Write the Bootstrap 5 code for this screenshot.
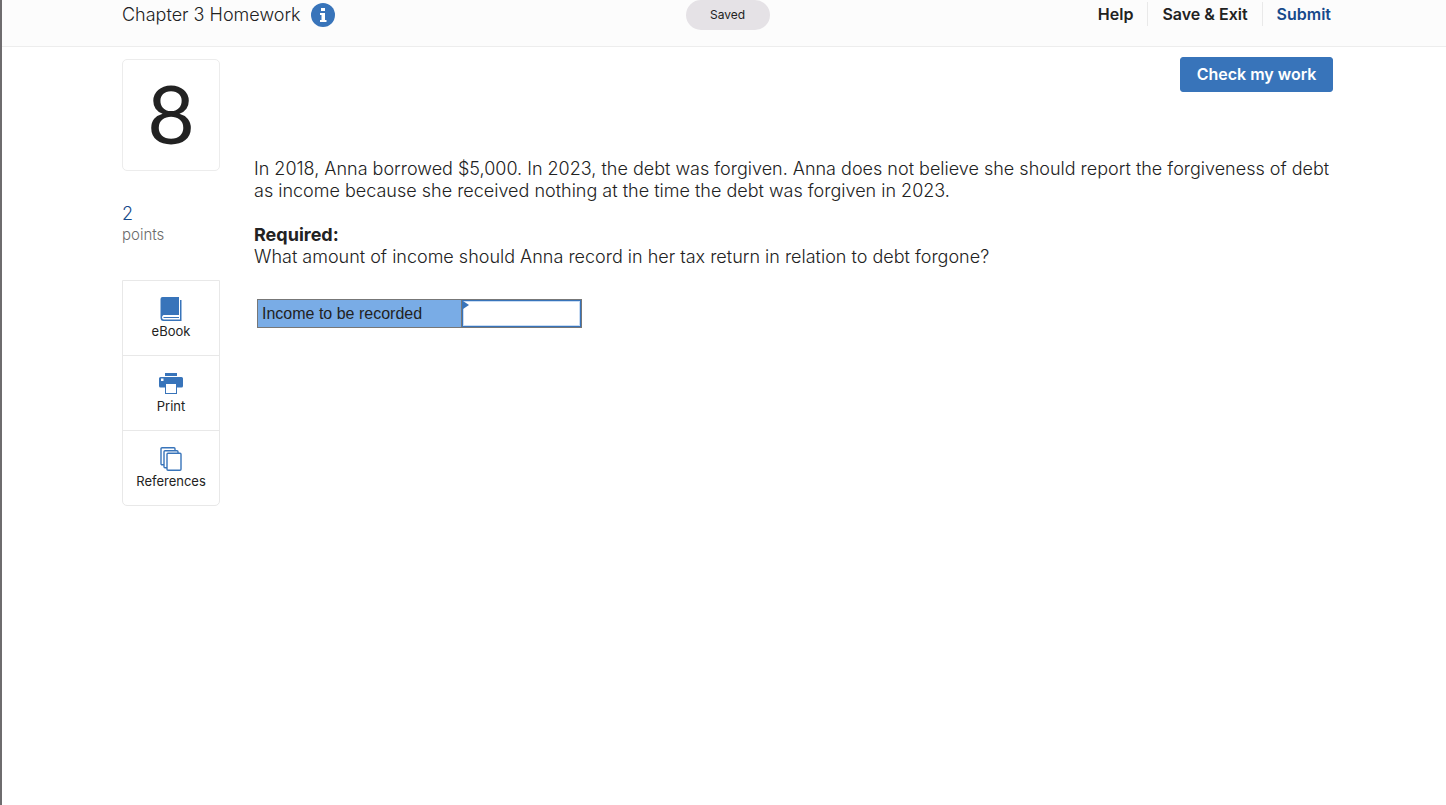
<!DOCTYPE html>
<html lang="en">
<head>
<meta charset="utf-8">
<meta name="viewport" content="width=device-width, initial-scale=1">
<title>Chapter 3 Homework</title>
<link href="https://cdn.jsdelivr.net/npm/bootstrap@5.3.0/dist/css/bootstrap.min.css" rel="stylesheet">
<style>
  :root { --brand: #3874ba; --ink: #222; --rule: #e8e8e8; }
  body { font: 300 18px/22px Inter, "Open Sans", sans-serif; color: var(--ink); border-left: 2px solid #6e6c6e; }
  .page-gutter { padding-left: 120px; padding-right: 113px; }
  .topbar { background: #fcfcfc; border-bottom: 1px solid #ededed; height: 47px; }
  .topbar .side { flex: 1 1 0; height: 30px; }
  .title-group { gap: 10px; }
  .assignment-title { font-size: 18px; font-weight: 300; line-height: 22px; }
  .save-state { background: #e5e2e6; font-size: 12px; font-weight: 400; line-height: 30px; width: 84px; }
  .info-btn { width: 24px; height: 24px; }
  .toplinks { height: 28px; }
  .toplinks a { font-size: 16px; font-weight: 600; line-height: 24px; color: var(--ink); padding: 0 14px; border-left: 1px solid #e9e9e9; }
  .toplinks li:first-child a { border-left: 0; }
  .toplinks li:last-child a { color: #174a8b; padding-right: 2px; }
  .rail { width: 98px; padding-top: 12px; }
  .question-no { height: 112px; border: 1px solid #ececec; border-radius: 5px; font: 400 82px/104px Lato, sans-serif; }
  .points { margin: 32px 0 35px; }
  .points-value { color: #174a8b; font-size: 18px; }
  .points-label { color: #6b6b6b; font-size: 15px; line-height: 20px; }
  .tools { border: 1px solid var(--rule); border-radius: 0 0 5px 5px; }
  .tools button { height: 74px; font-size: 13px; font-weight: 400; line-height: 20px; color: var(--ink); background: none; border: 0; padding: 2px 0 0; }
  .tools li + li { border-top: 1px solid var(--rule); }
  .check-btn { --bs-btn-bg: var(--brand); --bs-btn-border-color: var(--brand); --bs-btn-color: #fff; --bs-btn-hover-bg: #2e639f; --bs-btn-hover-color: #fff; --bs-btn-padding-x: 0; --bs-btn-padding-y: 0; --bs-btn-border-radius: 3px; width: 153px; height: 35px; padding-bottom: 2px; font-size: 16px; font-weight: 600; }
  .question { padding: 10px 0 0 34px; }
  .question-text { margin-top: 66px; margin-right: -8px; }
  .required { margin-top: 22px; }
  .answer { border-collapse: collapse; font: 400 16px/26px "Liberation Sans", Arial, sans-serif; margin: 31px 0 0 3px; }
  .answer th { background: #79ace6; border: 1px solid #777; width: 204px; padding: 0 4px; font-weight: 400; }
  .answer td { border: 1px solid #777; width: 120px; padding: 0; position: relative; }
  .answer input { display: block; width: 100%; height: 27px; border: 1px solid var(--brand); box-shadow: inset 0 0 0 1px #c9dcf3; outline: 0; padding: 0 8px; background: #fff; }
  .cell-flag { position: absolute; left: 1px; top: 1px; border: solid transparent; border-width: 4px 0 4px 6px; border-left-color: var(--brand); pointer-events: none; }
</style>
</head>
<body class="min-vh-100">
<header class="topbar page-gutter d-flex align-items-start">
  <div class="side title-group d-flex align-items-center">
    <h1 class="assignment-title m-0">Chapter 3 Homework</h1>
    <button type="button" class="info-btn btn p-0 border-0 d-flex" aria-label="Assignment information">
      <svg width="24" height="24" viewBox="0 0 24 24" aria-hidden="true"><circle cx="12" cy="12" r="12" fill="#3874ba"/><path fill="#fff" d="M10 5h4v3h-4zM9 10h5v7h1.500v2H9v-2h1.500v-5H9z"/></svg>
    </button>
  </div>
  <div class="save-state rounded-pill text-center" role="status">Saved</div>
  <nav class="side" aria-label="Assignment">
    <ul class="toplinks list-unstyled d-flex justify-content-end align-items-center m-0">
      <li><a class="d-block text-decoration-none" href="#">Help</a></li>
      <li><a class="d-block text-decoration-none" href="#">Save &amp; Exit</a></li>
      <li><a class="d-block text-decoration-none" href="#">Submit</a></li>
    </ul>
  </nav>
</header>
<div class="page-gutter d-flex align-items-start">
  <aside class="rail flex-shrink-0">
    <div class="question-no text-center">8</div>
    <div class="points">
      <div class="points-value">2</div>
      <div class="points-label">points</div>
    </div>
    <ul class="tools list-unstyled mb-0">
      <li><button type="button" class="w-100 d-flex flex-column align-items-center justify-content-center">
        <svg width="24" height="24" viewBox="0 0 24 24" aria-hidden="true"><path fill="#3874ba" d="M3.500 0H20v18H4.500Q3 18.500 3 20.500T5 22.500H21V3h1.500v21H4.500Q1.500 24 1.500 20.500V2Q1.500 0 3.500 0z"/><path fill="#3874ba" d="M4.500 20H20v1H4.500z"/></svg>
        eBook</button></li>
      <li><button type="button" class="w-100 d-flex flex-column align-items-center justify-content-center">
        <svg width="24" height="24" viewBox="0 0 24 24" aria-hidden="true"><path fill="#3874ba" fill-rule="evenodd" d="M6 1h12v3H6zM1.500 5h21Q24 5 24 6.500V14q0 1.500-1.500 1.500H18V22H6v-6.500H1.500Q0 15.500 0 14V6.500Q0 5 1.500 5zM7 12v9h10v-9zM2 6.500V9h2.500V6.500z"/></svg>
        Print</button></li>
      <li><button type="button" class="w-100 d-flex flex-column align-items-center justify-content-center">
        <svg width="24" height="24" viewBox="0 0 24 24" aria-hidden="true" fill="#fff" stroke="#3874ba" stroke-width="1.400"><rect x="2" y=".7" width="14" height="17" rx="1"/><rect x="5" y="3.700" width="14" height="17" rx="1"/><rect x="8" y="6.300" width="14" height="17" rx="1"/></svg>
        References</button></li>
    </ul>
  </aside>
  <main class="question flex-grow-1">
    <div class="d-flex justify-content-end"><button type="button" class="check-btn btn">Check my work</button></div>
    <div class="question-text">
      <p class="m-0">In 2018, Anna borrowed $5,000. In 2023, the debt was forgiven. Anna does not believe she should report the forgiveness of debt as income because she received nothing at the time the debt was forgiven in 2023.</p>
      <p class="required mb-0"><strong class="fw-bold">Required:</strong><br>What amount of income should Anna record in her tax return in relation to debt forgone?</p>
    </div>
    <table class="answer">
      <tr><th scope="row"><label for="income">Income to be recorded</label></th>
      <td><input id="income" type="text"><span class="cell-flag"></span></td></tr>
    </table>
  </main>
</div>
<script src="https://cdn.jsdelivr.net/npm/bootstrap@5.3.0/dist/js/bootstrap.bundle.min.js"></script>
</body>
</html>
